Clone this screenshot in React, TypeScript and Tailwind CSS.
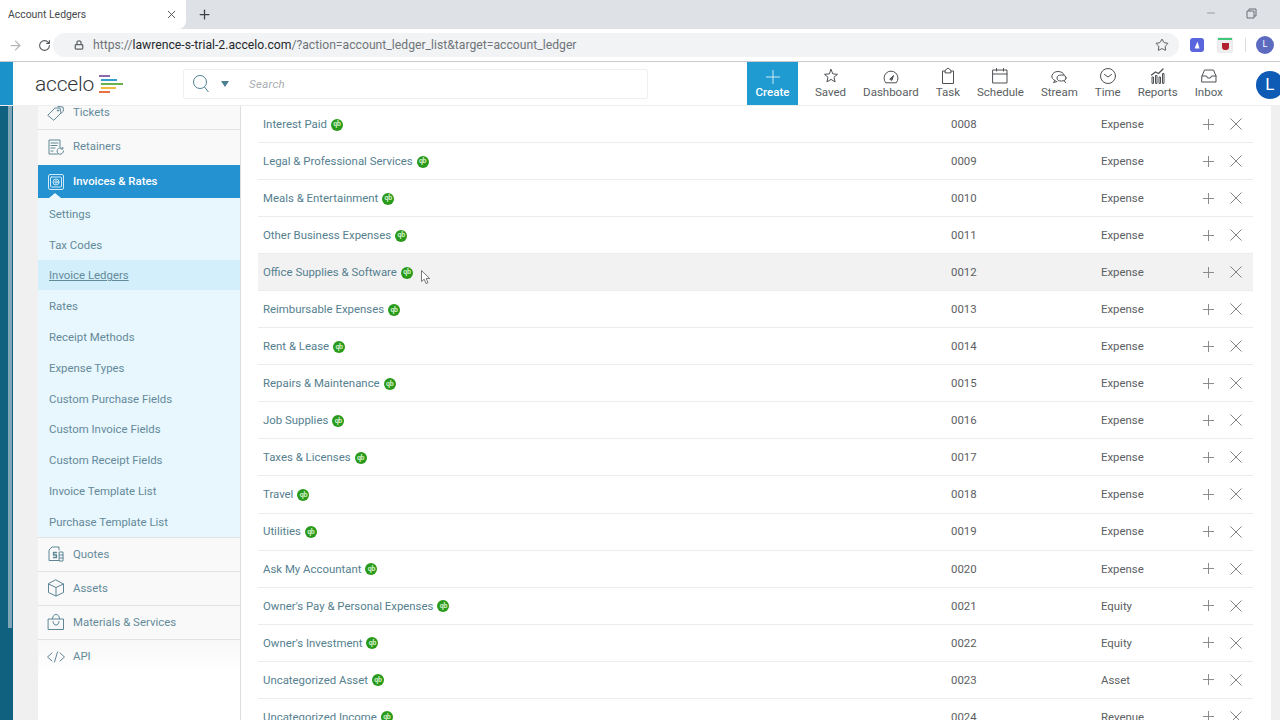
import { ArrowRight, Lock, Minus, Plus, RotateCw, Star, X } from "lucide-react";
import type { ReactNode } from "react";

const rows = [
  ["Interest Paid", "0008", "Expense"],
  ["Legal & Professional Services", "0009", "Expense"],
  ["Meals & Entertainment", "0010", "Expense"],
  ["Other Business Expenses", "0011", "Expense"],
  ["Office Supplies & Software", "0012", "Expense"],
  ["Reimbursable Expenses", "0013", "Expense"],
  ["Rent & Lease", "0014", "Expense"],
  ["Repairs & Maintenance", "0015", "Expense"],
  ["Job Supplies", "0016", "Expense"],
  ["Taxes & Licenses", "0017", "Expense"],
  ["Travel", "0018", "Expense"],
  ["Utilities", "0019", "Expense"],
  ["Ask My Accountant", "0020", "Expense"],
  ["Owner's Pay & Personal Expenses", "0021", "Equity"],
  ["Owner's Investment", "0022", "Equity"],
  ["Uncategorized Asset", "0023", "Asset"],
  ["Uncategorized Income", "0024", "Revenue"],
];

const subItems = [
  "Settings",
  "Tax Codes",
  "Invoice Ledgers",
  "Rates",
  "Receipt Methods",
  "Expense Types",
  "Custom Purchase Fields",
  "Custom Invoice Fields",
  "Custom Receipt Fields",
  "Invoice Template List",
  "Purchase Template List",
];

function Svg({ size = 20, children }: { size?: number; children: ReactNode }) {
  return (
    <svg width={size} height={size} viewBox="0 0 20 20" fill="none" stroke="currentColor" strokeWidth="1" strokeLinecap="round" strokeLinejoin="round">
      {children}
    </svg>
  );
}

const navItems: { label: string; icon: ReactNode }[] = [
  {
    label: "Saved",
    icon: (
      <Svg>
        <path d="M10 3.500l1.900 4.400 4.600.4-3.500 3 1.100 4.600-4.100-2.500-4.100 2.500 1.100-4.600-3.500-3 4.600-.4z" />
      </Svg>
    ),
  },
  {
    label: "Dashboard",
    icon: (
      <Svg>
        <path d="M4.500 16.500a7 7 0 1 1 11 0z" />
        <path d="M9 13l3.500-3.500-1.500 4.500z" fill="currentColor" />
      </Svg>
    ),
  },
  {
    label: "Task",
    icon: (
      <Svg>
        <path d="M7 5H4.500v12.500h11V5H13" />
        <path d="M7 6.500V4.500l3-2.500 3 2.500v2z" />
      </Svg>
    ),
  },
  {
    label: "Schedule",
    icon: (
      <Svg>
        <rect x="3" y="4" width="14" height="13" />
        <path d="M3 8h14M6.500 2.500V5M13.500 2.500V5" />
      </Svg>
    ),
  },
  {
    label: "Stream",
    icon: (
      <Svg>
        <path d="M6 14.500c-2.500-1-3.500-2.800-3-5 .7-2.700 3.300-4 6-4s5.600 1.300 6.200 3.500" />
        <path d="M6 14.500l-1.500 2 3.500-1" />
        <ellipse cx="12.500" cy="12" rx="4.500" ry="3" />
        <path d="M15 14.500l1.500 2" />
      </Svg>
    ),
  },
  {
    label: "Time",
    icon: (
      <Svg>
        <circle cx="10" cy="10" r="7.500" />
        <path d="M6.500 8.500l3.500 2.500 3.500-2.500" />
      </Svg>
    ),
  },
  {
    label: "Reports",
    icon: (
      <Svg>
        <path d="M4 17v-6h1.500v6zM7.500 17V9.500H9V17zM11 17v-6h1.500v6zM14.500 17V7.500H16V17z" />
        <path d="M3.500 9l4-3 3 1.500 4.500-4.500" strokeWidth="1.300" />
      </Svg>
    ),
  },
  {
    label: "Inbox",
    icon: (
      <Svg>
        <path d="M3 10l2.500-6h9l2.500 6v6H3z" />
        <path d="M3 10h4.500l1 2h3l1-2H17" />
      </Svg>
    ),
  },
];

const TicketsIcon = (
  <Svg>
    <path d="M2 12l7-7h5l1 5-7 7z" />
    <path d="M12 3.500l5 .5.500 4-2 2" />
    <circle cx="12" cy="7.500" r=".7" />
  </Svg>
);
const RetainersIcon = (
  <Svg>
    <path d="M12 17H3V3h11v7" />
    <path d="M5 6h7M5 8.500h6M5 11h4M5 14h2" />
    <path d="M17.500 14a3.200 3.200 0 1 1-1-2.300" />
    <path d="M16.800 10.300v1.700h-1.700" />
  </Svg>
);
const InvoicesIcon = (
  <Svg>
    <rect x="2.500" y="2.500" width="15" height="15" rx="1.500" />
    <rect x="4.500" y="5" width="11" height="10" rx="1" />
    <circle cx="10" cy="10" r="3" />
    <circle cx="10" cy="10" r="1.200" />
  </Svg>
);
const QuotesIcon = (
  <Svg>
    <path d="M13 16.500H3V6l3-3h7v3" />
    <rect x="13.500" y="8" width="3.500" height="9" />
    <path d="M13.500 11h3.500M13.500 14h3.500" />
    <path d="M10.500 8.500H7.500v2.500h3v2.500H7.500" strokeWidth="1.300" />
  </Svg>
);
const AssetsIcon = (
  <Svg>
    <path d="M10 2l7.500 4v8.500L10 18l-7.500-3.500V6z" />
    <path d="M2.500 6L10 9.500 17.500 6M10 9.500V18" />
  </Svg>
);
const MaterialsIcon = (
  <Svg>
    <path d="M2.500 7h15v10.500h-15z" />
    <path d="M6.500 7c0-3 1.500-4.500 3.500-4.500S13.500 4 13.500 7" />
    <path d="M7 9.500c.3 2.500 1.500 3.500 3 3.500s2.700-1 3-3.500" />
  </Svg>
);
const ApiIcon = (
  <Svg>
    <path d="M6 6l-4.500 4L6 14M14 6l4.500 4-4.500 4M11.500 5l-3 10" />
  </Svg>
);

function SideRow({ icon, label, className = "h-[34px]" }: { icon: ReactNode; label: string; className?: string }) {
  return (
    <div className={`flex shrink-0 items-center gap-[7px] border-b border-[#dfe3e5] bg-[#f9f9f9] pl-[8px] text-[#648a99] ${className}`}>
      <span className="flex w-[20px] justify-center text-[#5e8696]">{icon}</span>
      <span className="text-[11.4px]">{label}</span>
    </div>
  );
}

function Sidebar() {
  return (
    <aside className="flex w-[203px] shrink-0 flex-col overflow-hidden border-r border-[#dcdfe1] bg-white">
      <div className="-mt-[10px] flex flex-col">
        <SideRow icon={TicketsIcon} label="Tickets" className="h-[34px]" />
        <SideRow icon={RetainersIcon} label="Retainers" className="h-[35px] border-b-0 pb-[1px]" />
        <div className="relative flex h-[33px] shrink-0 items-center gap-[7px] bg-[#2491d1] pl-[8px] text-white">
          <span className="flex w-[20px] justify-center text-[#cfe9f7]">{InvoicesIcon}</span>
          <span className="text-[11.4px] font-medium">Invoices &amp; Rates</span>
          <span className="absolute bottom-0 left-[11px] h-0 w-0 border-x-[6px] border-b-[5px] border-x-transparent border-b-[#e8f6fe]" />
        </div>
        <div className="flex flex-col border-b border-[#dfe3e5] bg-[#e8f6fe]">
          {subItems.map((item) => (
            <div
              key={item}
              className={`flex h-[30.8px] items-center pl-[11px] pt-[2px] text-[11.4px] text-[#648a99] ${item === "Invoice Ledgers" ? "bg-[#d3effc] underline" : ""}`}
            >
              {item}
            </div>
          ))}
        </div>
        <SideRow icon={QuotesIcon} label="Quotes" />
        <SideRow icon={AssetsIcon} label="Assets" />
        <SideRow icon={MaterialsIcon} label="Materials & Services" />
        <SideRow icon={ApiIcon} label="API" className="h-[34px] border-b-0 bg-gradient-to-b from-[#f8f8f8] to-white" />
      </div>
    </aside>
  );
}

function BrowserChrome() {
  return (
    <>
      <div className="flex h-[29px] shrink-0 bg-[#dee1e6]">
        <div className="flex w-[186px] items-center rounded-br-lg bg-white pl-[8px] text-[10.4px] text-[#45494d]">
          <span>Account Ledgers</span>
          <X size={13} strokeWidth={1.6} className="ml-auto mr-[8px] text-[#3c4043]" />
        </div>
        <Plus size={15} strokeWidth={2} className="ml-[11px] mt-[7px] text-[#3c4043]" />
        <div className="ml-auto flex items-center gap-[29px] pb-[3px] pr-[23px] text-[#6b6f75]">
          <Minus size={12} strokeWidth={1.2} />
          <svg width="11" height="11" viewBox="0 0 11 11" fill="none" stroke="currentColor">
            <path d="M1 3h7v7H1zM3 3V1h7v7H8" />
          </svg>
        </div>
      </div>
      <div className="flex h-[33px] shrink-0 items-center border-b border-[#c9cbce] bg-white">
        <ArrowRight size={15} className="ml-[8px] text-[#b4b7ba]" />
        <RotateCw size={13} strokeWidth={2} className="ml-[15px] text-[#55585c]" />
        <div className="ml-[2px] flex h-[24px] w-[1126px] items-center rounded-full bg-[#f1f3f4] pl-[21px] text-[12.2px]">
          <Lock size={10} strokeWidth={3} className="text-[#5f6368]" />
          <span className="ml-[9px] text-[#70757a]">
            https://<span className="text-[#26292c]">lawrence-s-trial-2.accelo.com</span>/?action=account_ledger_list&amp;target=account_ledger
          </span>
          <Star size={14} strokeWidth={1.5} className="ml-auto mr-[10px] text-[#43474b]" />
        </div>
        <div className="ml-[11px] flex h-[14px] w-[14px] items-center justify-center rounded-[3px] bg-[#5865dd]">
          <span className="h-[7px] w-[5px] bg-white [clip-path:polygon(60%_0,100%_100%,0_100%)]" />
        </div>
        <div className="ml-[14px] flex h-[14px] w-[14px] items-center justify-center border-t-2 border-t-[#41c77a] bg-[#eeeeee] shadow-[0_0_1px_#888]">
          <span className="h-[7px] w-[7px] rounded-b-[3px] bg-[#b21f2d]" />
        </div>
        <span className="ml-[13px] h-[14px] w-px bg-[#dadce0]" />
        <div className="ml-[10px] flex h-[18px] w-[18px] items-center justify-center rounded-full bg-[#5c6bc0] text-[9px] text-white">L</div>
      </div>
    </>
  );
}

function AppHeader() {
  return (
    <header className="flex h-[44px] shrink-0 overflow-hidden border-b border-[#eceeef] bg-white">
      <div className="w-[13px] shrink-0 bg-[#1b92c9]" />
      <div className="flex w-[170px] shrink-0 items-center pl-[22px] pt-[1px]">
        <span className="text-[21px] font-light leading-none tracking-[-0.2px] text-[#33373a]">accelo</span>
        <svg width="26" height="20" viewBox="0 0 26 20" className="ml-[4px]" fill="none" strokeWidth="1.800">
          <path d="M1 2h11" stroke="#7e5aa8" />
          <path d="M3 6h16" stroke="#1f94c8" />
          <path d="M3 10h22" stroke="#58a83c" />
          <path d="M3 14h15" stroke="#f0b429" />
          <path d="M1 18h11" stroke="#e2622b" />
        </svg>
      </div>
      <div className="mt-[7px] flex h-[30px] w-[465px] shrink-0 items-center rounded-[2px] border border-[#efefef] pl-[8px]">
        <svg width="18" height="20" viewBox="0 0 18 20" fill="none" stroke="#4d7f92" strokeWidth="1">
          <circle cx="8" cy="8" r="6.500" />
          <path d="M12.500 13l4 5" />
        </svg>
        <span className="ml-[11px] h-0 w-0 border-x-[4px] border-t-[6px] border-x-transparent border-t-[#4d7f92]" />
        <span className="ml-[20px] pt-[1px] text-[11.5px] italic tracking-[0.3px] text-[#a9adb0]">Search</span>
      </div>
      <div className="ml-[99px] flex h-[44px] w-[51px] shrink-0 flex-col items-center bg-[#1f9bd1] text-white">
        <svg width="14" height="14" viewBox="0 0 14 14" className="mt-[8px]" stroke="#cdeaf7" strokeWidth="1">
          <path d="M7 0v14M0 7h14" />
        </svg>
        <span className="text-[11.5px] font-medium leading-[16px]">Create</span>
      </div>
      <nav className="ml-[17px] flex shrink-0 gap-[17px]">
        {navItems.map((item) => (
          <div key={item.label} className="flex flex-col items-center text-[#4d5155]">
            <span className="mt-[4px] h-[20px]">{item.icon}</span>
            <span className="-mt-[2px] text-[11.5px] leading-[16px] text-[#5a5e62]">{item.label}</span>
          </div>
        ))}
      </nav>
      <div className="ml-[33px] mt-[9px] flex h-[28px] w-[28px] shrink-0 items-center justify-center rounded-full bg-[#0d5bb5] text-[17px] text-white">L</div>
    </header>
  );
}

function LedgerRow({ name, code, type, hover }: { name: string; code: string; type: string; hover: boolean }) {
  return (
    <div className={`flex h-[37.06px] shrink-0 items-center border-b border-[#ececec] pl-[5px] text-[11.4px] ${hover ? "bg-[#f2f2f2]" : ""}`}>
      <div className="flex w-[688px] items-center gap-[4px] pt-[1px] text-[#55808f]">
        <span>{name}</span>
        <span className="flex h-[12px] w-[12px] items-center justify-center rounded-full bg-[#2a9a1a] text-[7px] font-bold tracking-[-0.3px] text-[#d5f0cc]">qb</span>
      </div>
      <div className="w-[150px] pt-[1px] text-[#5c6063]">{code}</div>
      <div className="w-[102px] pt-[1px] text-[#5c6063]">{type}</div>
      <svg width="11" height="11" viewBox="0 0 11 11" stroke="#8a8c8e" strokeWidth="1">
        <path d="M5.500 0v11M0 5.500h11" />
      </svg>
      <svg width="12" height="12" viewBox="0 0 12 12" stroke="#808284" strokeWidth="1" className="ml-[16px]">
        <path d="M.5.500l11 11M11.500.500l-11 11" />
      </svg>
    </div>
  );
}

export default function App() {
  return (
    <div className="flex h-screen w-full flex-col overflow-hidden bg-white font-['Roboto',sans-serif]">
      <BrowserChrome />
      <AppHeader />
      <div className="flex min-h-0 flex-1">
        <div className="relative w-[13px] shrink-0 bg-[#10607f]">
          <span className="absolute left-[8px] top-0 h-[522px] w-[4px] bg-[#7fa5b6]" />
        </div>
        <div className="w-[25px] shrink-0 bg-[#f0f0f0]" />
        <Sidebar />
        <main className="relative flex w-[1030px] shrink-0 flex-col overflow-hidden bg-white pl-[17px] pr-[18px]">
          {rows.map((r, i) => (
            <LedgerRow key={r[1]} name={r[0]} code={r[1]} type={r[2]} hover={i === 4} />
          ))}
          <svg width="10" height="15" viewBox="0 0 10 15" className="absolute left-[180px] top-[164px]" fill="white" stroke="#555a5e" strokeWidth="0.800">
            <path d="M.5.500v11l2.700-2.300 1.800 4.300 2-.8-1.800-4.200h3.500z" />
          </svg>
        </main>
        <div className="flex-1 bg-[#f0f0f0]" />
      </div>
    </div>
  );
}
